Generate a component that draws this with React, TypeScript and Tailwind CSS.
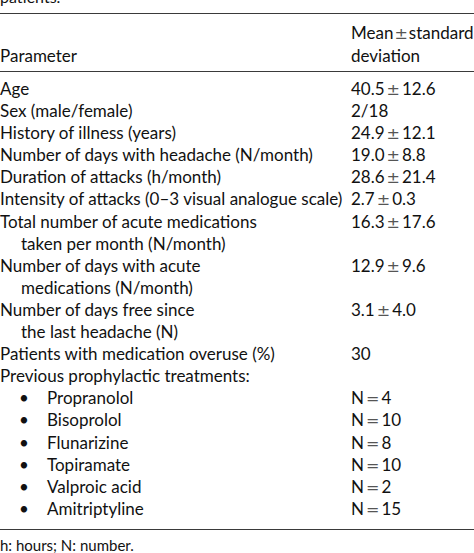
import React from 'react';

type Row = {
  label: string;
  cont?: string;
  value?: string;
  bullet?: boolean;
};

const rows: Row[] = [
  { label: 'Age', value: '40.5 ± 12.6' },
  { label: 'Sex (male/female)', value: '2/18' },
  { label: 'History of illness (years)', value: '24.9 ± 12.1' },
  { label: 'Number of days with headache (N/month)', value: '19.0 ± 8.8' },
  { label: 'Duration of attacks (h/month)', value: '28.6 ± 21.4' },
  { label: 'Intensity of attacks (0–3 visual analogue scale)', value: '2.7 ± 0.3' },
  { label: 'Total number of acute medications', cont: 'taken per month (N/month)', value: '16.3 ± 17.6' },
  { label: 'Number of days with acute', cont: 'medications (N/month)', value: '12.9 ± 9.6' },
  { label: 'Number of days free since', cont: 'the last headache (N)', value: '3.1 ± 4.0' },
  { label: 'Patients with medication overuse (%)', value: '30' },
  { label: 'Previous prophylactic treatments:' },
  { label: 'Propranolol', value: 'N = 4', bullet: true },
  { label: 'Bisoprolol', value: 'N = 10', bullet: true },
  { label: 'Flunarizine', value: 'N = 8', bullet: true },
  { label: 'Topiramate', value: 'N = 10', bullet: true },
  { label: 'Valproic acid', value: 'N = 2', bullet: true },
  { label: 'Amitriptyline', value: 'N = 15', bullet: true },
];

// math-style operator, a bit wider and lighter than the text face
function Op({ ch, tight }: { ch: string; tight?: boolean }) {
  return (
    <span
      className={
        tight
          ? 'mx-[1px] text-[#555] text-[16px] leading-[10px]'
          : 'mx-[2px] text-[#555] text-[16px] leading-[10px]'
      }
      style={{ fontFamily: '"DejaVu Sans", sans-serif' }}
    >
      {ch}
    </span>
  );
}

function Value({ text }: { text?: string }) {
  if (!text) return null;
  const pm = text.split(' ± ');
  if (pm.length === 2) {
    return (
      <span>
        {pm[0]}
        <Op ch="±" />
        {pm[1]}
      </span>
    );
  }
  const eq = text.split(' = ');
  if (eq.length === 2) {
    return (
      <span>
        {eq[0]}
        <Op ch="=" />
        {eq[1]}
      </span>
    );
  }
  return <span>{text}</span>;
}

export default function App() {
  return (
    <div
      className="w-[474px] h-[553px] bg-white text-[#111] overflow-hidden"
      style={{ fontFamily: 'Lato, "Open Sans", sans-serif' }}
    >
      <div className="h-[6px] overflow-hidden">
        <div className="-mt-[13px] text-[16px] leading-[20px]">patients.</div>
      </div>
      <div className="mt-[7px] border-t-[1.5px] border-[#3a3a3a]" />

      <div className="grid grid-cols-[351px_1fr] text-[17px] leading-[23px] pt-[7px] pb-[4px]">
        <div className="flex items-end">Parameter</div>
        <div>
          <div className="whitespace-nowrap">
            Mean
            <Op ch="±" tight />
            standard
          </div>
          <div>deviation</div>
        </div>
      </div>
      <div className="border-t-[1px] border-[#3a3a3a]" />

      <div className="pt-[6px] pb-[9px] text-[17px] leading-[22.1px]">
        {rows.map((r, i) => (
          <div key={i} className="grid grid-cols-[351px_1fr]">
            <div className="whitespace-nowrap">
              {r.bullet ? (
                <div className="flex">
                  <span className="w-[47px] pl-[19px]">•</span>
                  <span>{r.label}</span>
                </div>
              ) : (
                <div>{r.label}</div>
              )}
              {r.cont && <div className="pl-[21px]">{r.cont}</div>}
            </div>
            <div className="whitespace-nowrap">
              <Value text={r.value} />
            </div>
          </div>
        ))}
      </div>
      <div className="border-t-[1.5px] border-[#3a3a3a]" />
      <div className="pt-[6px] text-[15px] leading-[19px]">h: hours; N: number.</div>
    </div>
  );
}
